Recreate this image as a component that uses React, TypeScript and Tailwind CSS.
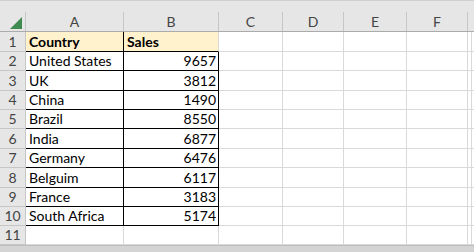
import React from 'react';

const rows: [string, string][] = [
  ['Country', 'Sales'],
  ['United States', '9657'],
  ['UK', '3812'],
  ['China', '1490'],
  ['Brazil', '8550'],
  ['India', '6877'],
  ['Germany', '6476'],
  ['Belguim', '6117'],
  ['France', '3183'],
  ['South Africa', '5174'],
  ['', ''],
];

// row heights so the gridlines land where Excel puts them
const heights = ['h-[20px]', 'h-[19px]', 'h-[20px]', 'h-[19px]', 'h-[19px]', 'h-[20px]', 'h-[19px]', 'h-[20px]', 'h-[19px]', 'h-[19px]', 'h-[19px]'];

const font = { fontFamily: 'Lato, "Open Sans", sans-serif' };

export default function App() {
  return (
    <div className="w-[474px] h-[252px] overflow-hidden bg-[#e6e6e6] flex flex-col text-[14px] leading-none" style={font}>
      <div className="h-[12px] shrink-0 border-t border-[#cfcfcf] bg-[#e6e6e6]" />

      {/* column headers */}
      <div className="flex h-[20px] shrink-0 border-b border-[#ababab] text-[#444]">
        <div className="w-[26px] shrink-0 border-r border-[#c6c6c6] flex items-end justify-end pr-[3px] pb-[2px]">
          <svg width="12" height="12" viewBox="0 0 12 12">
            <polygon points="0,12 12,12 12,0" fill="#3f8a4f" />
          </svg>
        </div>
        <div className="w-[98px] shrink-0 border-r border-[#c6c6c6] flex items-center justify-center">A</div>
        <div className="w-[95px] shrink-0 border-r border-[#c6c6c6] flex items-center justify-center">B</div>
        <div className="w-[64px] shrink-0 border-r border-[#c6c6c6] flex items-center justify-center">C</div>
        <div className="w-[61px] shrink-0 border-r border-[#c6c6c6] flex items-center justify-center">D</div>
        <div className="w-[63px] shrink-0 border-r border-[#c6c6c6] flex items-center justify-center">E</div>
        <div className="w-[61px] shrink-0 border-r border-[#c6c6c6] flex items-center justify-center">F</div>
        <div className="flex-1" />
      </div>

      {/* sheet rows */}
      {rows.map(([country, sales], i) => {
        const inTable = i < 10;
        const isHead = i === 0;
        return (
          <div key={i} className={`flex shrink-0 ${heights[i]}`}>
            <div className="w-[26px] shrink-0 border-r border-b border-[#c6c6c6] text-[#444] flex items-center justify-center">
              {i + 1}
            </div>
            <div
              className={`w-[98px] shrink-0 border-r border-b flex items-center pl-[3px] ${
                isHead ? 'bg-[#fff2cc] font-bold border-r-black border-b-black' : inTable ? 'bg-white border-black' : 'bg-white border-[#d9d9d9]'
              } ${i === 10 ? 'border-t-0' : ''}`}
            >
              {country}
            </div>
            <div
              className={`w-[95px] shrink-0 border-r border-b flex items-center ${
                isHead
                  ? 'bg-[#fff2cc] font-bold pl-[3px] border-r-[#d9d9d9] border-b-black'
                  : inTable
                    ? 'bg-white border-black justify-end pr-[2px]'
                    : 'bg-white border-[#d9d9d9]'
              }`}
            >
              {sales}
            </div>
            <div className="w-[64px] shrink-0 bg-white border-r border-b border-[#d9d9d9]" />
            <div className="w-[61px] shrink-0 bg-white border-r border-b border-[#d9d9d9]" />
            <div className="w-[63px] shrink-0 bg-white border-r border-b border-[#d9d9d9]" />
            <div className="w-[61px] shrink-0 bg-white border-r border-b border-[#d9d9d9]" />
            <div className="w-[4px] shrink-0 bg-white border-r border-b border-[#d9d9d9]" />
            <div className="flex-1 bg-white border-b border-[#d9d9d9]" />
          </div>
        );
      })}

      <div className="flex-1 bg-[#d4d4d4] border-t border-[#bdbdbd]" />
    </div>
  );
}
